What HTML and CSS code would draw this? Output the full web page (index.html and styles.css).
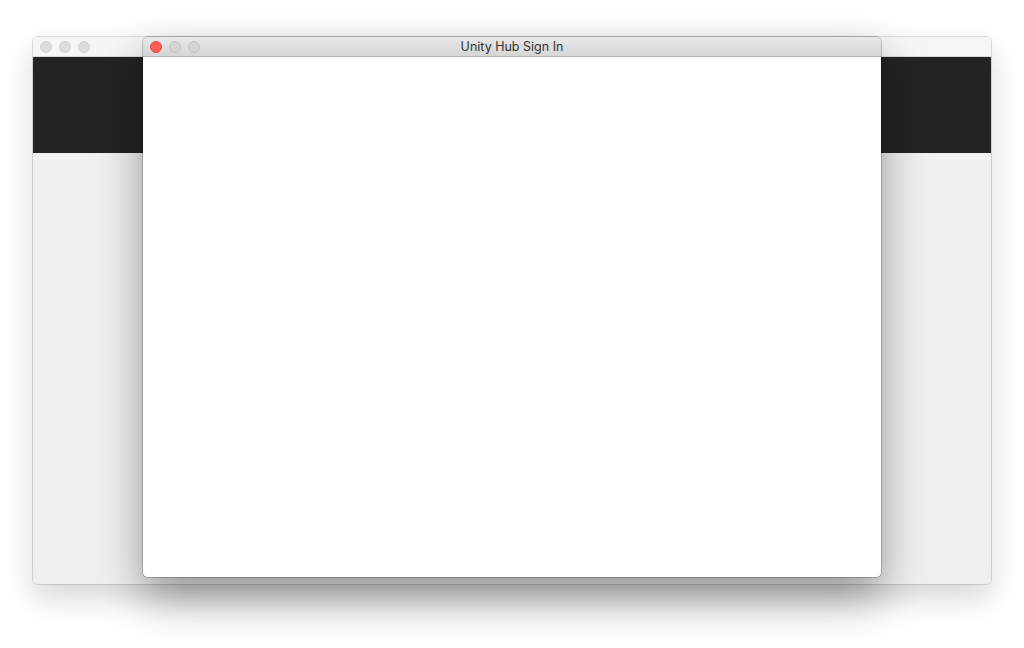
FILE: index.html
```html
<!DOCTYPE html>
<html lang="en">
<head>
<meta charset="utf-8">
<title>Unity Hub</title>
<link rel="stylesheet" href="styles.css">
</head>
<body>
<div class="desktop">
  <div class="window window-back">
    <div class="titlebar titlebar-inactive">
      <div class="lights">
        <span class="light"></span>
        <span class="light"></span>
        <span class="light"></span>
      </div>
    </div>
    <div class="hub-header"></div>
    <div class="hub-body"></div>
  </div>

  <div class="window window-front">
    <div class="titlebar titlebar-active">
      <div class="lights">
        <span class="light light-close"></span>
        <span class="light"></span>
        <span class="light"></span>
      </div>
      <div class="title">Unity Hub Sign In</div>
    </div>
    <div class="signin-body"></div>
  </div>
</div>
</body>
</html>
```
FILE: styles.css
```css
html, body {
  margin: 0;
  padding: 0;
  background: #ffffff;
  font-family: "Inter", "Liberation Sans", sans-serif;
}

.desktop {
  position: relative;
  width: 1024px;
  height: 648px;
  overflow: hidden;
}

.window {
  position: absolute;
  display: flex;
  flex-direction: column;
  border-radius: 5px;
  overflow: hidden;
}

.window-back {
  left: 33px;
  top: 37px;
  width: 958px;
  height: 547px;
  box-shadow: 0 0 0 1px rgba(0, 0, 0, 0.12), 0 14px 30px rgba(0, 0, 0, 0.16);
}

.window-front {
  left: 143px;
  top: 37px;
  width: 738px;
  height: 540px;
  box-shadow: 0 0 0 1px rgba(0, 0, 0, 0.2), 0 20px 45px rgba(0, 0, 0, 0.38);
}

.titlebar {
  position: relative;
  flex: 0 0 20px;
  height: 20px;
  display: flex;
  align-items: center;
  box-sizing: border-box;
}

.titlebar-inactive {
  background: #f6f6f6;
  border-bottom: 1px solid #d8d8d8;
}

.titlebar-active {
  background: linear-gradient(#e9e9e9, #d5d5d5);
  border-bottom: 1px solid #b4b4b4;
}

.lights {
  display: flex;
  gap: 7px;
  padding-left: 7px;
}

.light {
  width: 12px;
  height: 12px;
  border-radius: 50%;
  background: #dcdcdc;
  box-sizing: border-box;
  border: 1px solid #d0d0d0;
}

.titlebar-active .light {
  background: #d4d4d4;
  border-color: #c2c2c2;
}

.titlebar-active .light-close {
  background: #fd5f57;
  border-color: #e0443e;
}

.title {
  position: absolute;
  left: 0;
  right: 0;
  top: 0;
  bottom: 0;
  display: flex;
  align-items: center;
  justify-content: center;
  font-size: 12.5px;
  color: #333333;
  pointer-events: none;
}

.hub-header {
  flex: 0 0 96px;
  background: #232323;
}

.hub-body {
  flex: 1;
  background: #f0f0f0;
}

.signin-body {
  flex: 1;
  background: #ffffff;
}
```
